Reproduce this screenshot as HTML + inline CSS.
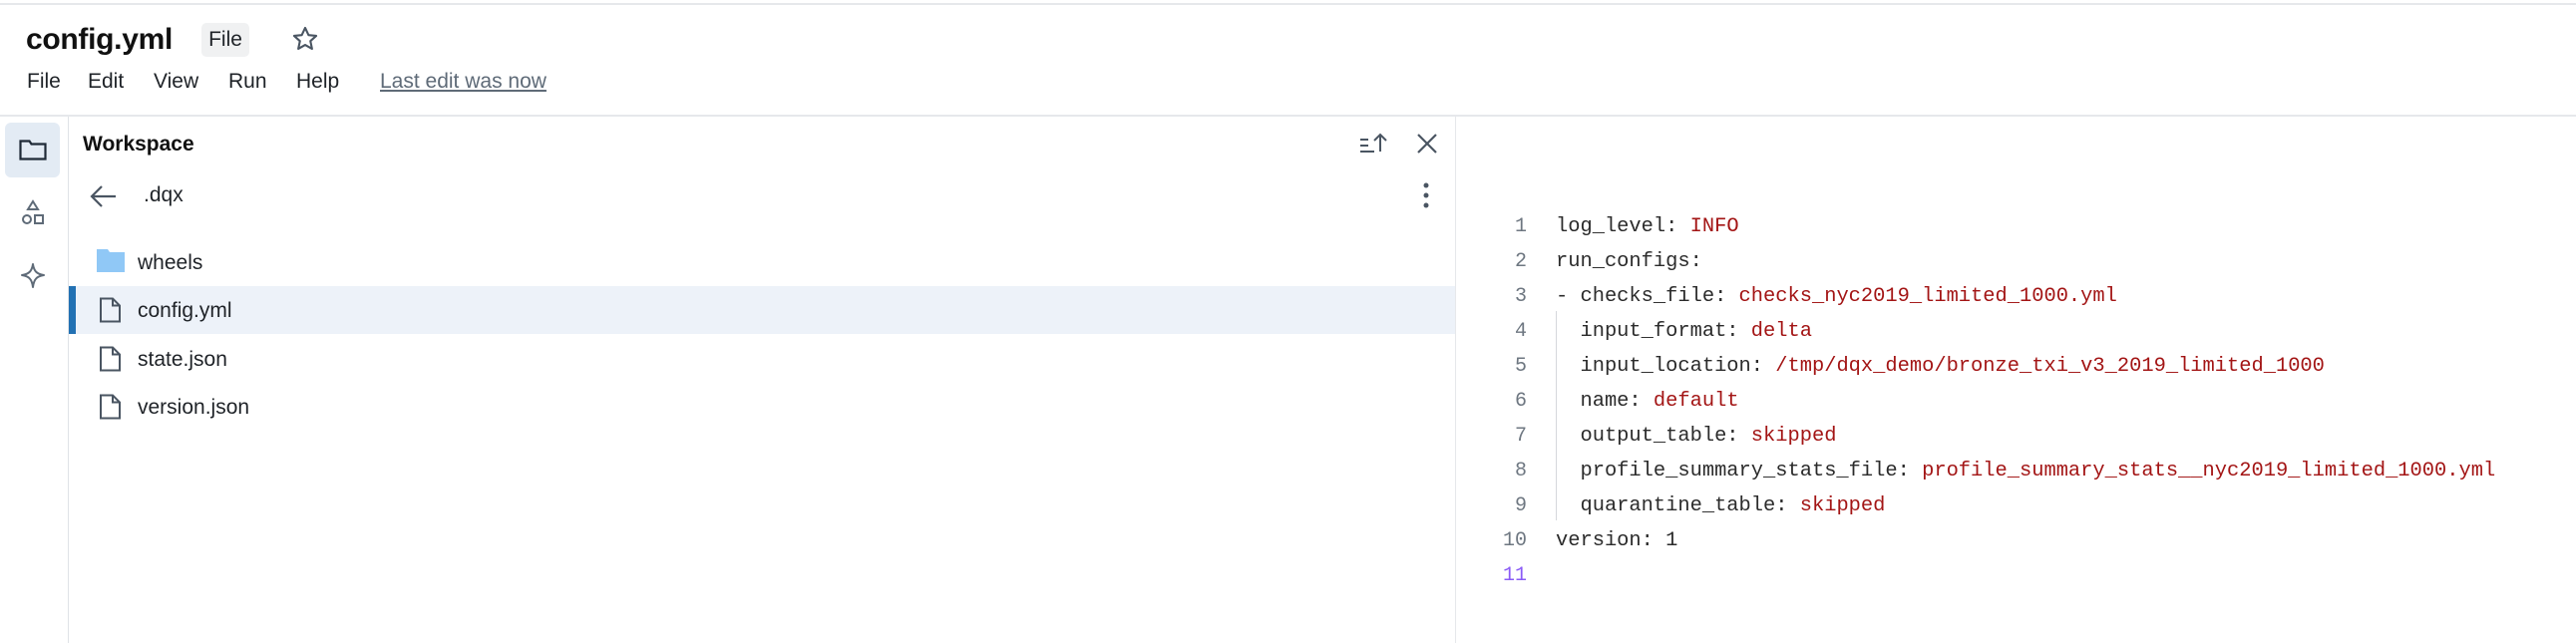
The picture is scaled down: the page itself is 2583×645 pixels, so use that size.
<!DOCTYPE html>
<html><head><meta charset="utf-8"><style>
*{margin:0;padding:0;box-sizing:border-box}
body{width:2583px;height:645px;background:#fff;position:relative;overflow:hidden;font-family:"Liberation Sans",sans-serif;color:#1f2328}
.a{position:absolute;white-space:nowrap}
.menu{font-size:21px;top:70px;color:#1f2328}
.row{font-size:21px;color:#1f2328}
.code{font-family:"Liberation Mono",monospace;font-size:20.4px;color:#2b2b2b;line-height:35px;white-space:pre}
.ln{position:absolute;width:40px;text-align:right;left:1491px;font-family:"Liberation Mono",monospace;font-size:20px;color:#6e7781}
.v{color:#a31515}
</style></head><body>
<div class="a" style="left:0;top:3px;width:2583px;height:2px;background:#e6e8eb"></div>
<div class="a" style="left:26px;top:23px;font-size:30px;font-weight:bold;color:#111;letter-spacing:-0.3px">config.yml</div>
<div class="a" style="left:202px;top:23px;width:48px;height:34px;background:#f0f1f2;border-radius:5px;font-size:21px;line-height:34px;text-align:center">File</div>
<svg class="a" style="left:291px;top:25px" width="30" height="28" viewBox="0 0 24 24"><path d="M12 2.5l2.9 6.2 6.6.7-5 4.5 1.4 6.6L12 17.2 6.1 20.5l1.4-6.6-5-4.5 6.6-.7z" fill="none" stroke="#4a5562" stroke-width="1.8" stroke-linejoin="round"/></svg>
<div class="a menu" style="left:27px">File</div>
<div class="a menu" style="left:88px">Edit</div>
<div class="a menu" style="left:154px">View</div>
<div class="a menu" style="left:229px">Run</div>
<div class="a menu" style="left:297px">Help</div>
<div class="a menu" style="left:381px;color:#5f6b78;text-decoration:underline">Last edit was now</div>
<div class="a" style="left:0;top:115px;width:2583px;height:2px;background:#e6e8eb"></div>
<div class="a" style="left:68px;top:117px;width:1px;height:528px;background:#e0e3e7"></div>
<div class="a" style="left:1459px;top:117px;width:1px;height:528px;background:#e6e8eb"></div>
<div class="a" style="left:5px;top:123px;width:55px;height:55px;background:#e3ebf4;border-radius:6px"></div>
<svg class="a" style="left:19px;top:140px" width="28" height="22" viewBox="0 0 28 22"><path d="M1.5 1.5h9l2 3h14v15h-25z" fill="none" stroke="#1f2a37" stroke-width="2.2"/></svg>
<svg class="a" style="left:19px;top:200px" width="28" height="28" viewBox="0 0 28 28"><path d="M14 2l5 8h-10z" fill="none" stroke="#5f6b78" stroke-width="2"/><circle cx="8" cy="20" r="4" fill="none" stroke="#5f6b78" stroke-width="2"/><rect x="16" y="16" width="8" height="8" fill="none" stroke="#5f6b78" stroke-width="2"/></svg>
<svg class="a" style="left:19px;top:263px" width="28" height="28" viewBox="0 0 28 28"><path d="M14 2c1 7 4 10 11 11-7 1-10 4-11 12-1-8-4-11-11-12 7-1 10-4 11-11z" fill="none" stroke="#5f6b78" stroke-width="2" stroke-linejoin="round"/></svg>
<div class="a" style="left:83px;top:133px;font-size:21px;font-weight:bold;color:#111">Workspace</div>
<svg class="a" style="left:1362px;top:132px" width="32" height="24" viewBox="0 0 32 24"><path d="M2 8h8M2 14h8M2 20h14M22 20V3M16 9l6-6 6 6" fill="none" stroke="#4a5562" stroke-width="2"/></svg>
<svg class="a" style="left:1419px;top:132px" width="24" height="24" viewBox="0 0 24 24"><path d="M3 3l18 18M21 3L3 21" stroke="#4a5562" stroke-width="2.2"/></svg>
<svg class="a" style="left:1424px;top:182px" width="12" height="28" viewBox="0 0 12 28"><circle cx="6" cy="4" r="2.5" fill="#4a5562"/><circle cx="6" cy="14" r="2.5" fill="#4a5562"/><circle cx="6" cy="24" r="2.5" fill="#4a5562"/></svg>
<svg class="a" style="left:90px;top:184px" width="28" height="26" viewBox="0 0 28 26"><path d="M26 13H3M12 3L2 13l10 10" fill="none" stroke="#4a5562" stroke-width="2.2"/></svg>
<div class="a row" style="left:144px;top:184px">.dqx</div>
<svg class="a" style="left:97px;top:250px" width="28" height="23" viewBox="0 0 28 23"><path d="M0 0h11l2 3h15v20H0z" fill="#90c8f6"/></svg>
<div class="a row" style="left:138px;top:252px">wheels</div>
<div class="a" style="left:69px;top:287px;width:1390px;height:48px;background:#edf2f9"></div>
<div class="a" style="left:69px;top:287px;width:7px;height:48px;background:#2271b3"></div>
<svg class="a" style="left:99px;top:298px" width="23" height="26" viewBox="0 0 23 26"><path d="M2 1.5h12l7 7v16H2z M14 1.5v7h7" fill="none" stroke="#4a5562" stroke-width="2"/></svg>
<div class="a row" style="left:138px;top:300px">config.yml</div>
<svg class="a" style="left:99px;top:347px" width="23" height="26" viewBox="0 0 23 26"><path d="M2 1.5h12l7 7v16H2z M14 1.5v7h7" fill="none" stroke="#4a5562" stroke-width="2"/></svg>
<div class="a row" style="left:138px;top:349px">state.json</div>
<svg class="a" style="left:99px;top:395px" width="23" height="26" viewBox="0 0 23 26"><path d="M2 1.5h12l7 7v16H2z M14 1.5v7h7" fill="none" stroke="#4a5562" stroke-width="2"/></svg>
<div class="a row" style="left:138px;top:397px">version.json</div>
<div class="a" style="left:1560px;top:312px;width:1px;height:210px;background:#d5d8dc"></div>
<div class="ln" style="top:210px;line-height:35px">1<br>2<br>3<br>4<br>5<br>6<br>7<br>8<br>9<br>10<br><span style="color:#8b5cf6">11</span></div>
<pre class="a code" style="left:1560px;top:210px">log_level: <span class="v">INFO</span>
run_configs:
- checks_file: <span class="v">checks_nyc2019_limited_1000.yml</span>
  input_format: <span class="v">delta</span>
  input_location: <span class="v">/tmp/dqx_demo/bronze_txi_v3_2019_limited_1000</span>
  name: <span class="v">default</span>
  output_table: <span class="v">skipped</span>
  profile_summary_stats_file: <span class="v">profile_summary_stats__nyc2019_limited_1000.yml</span>
  quarantine_table: <span class="v">skipped</span>
version: 1
</pre>
</body></html>
